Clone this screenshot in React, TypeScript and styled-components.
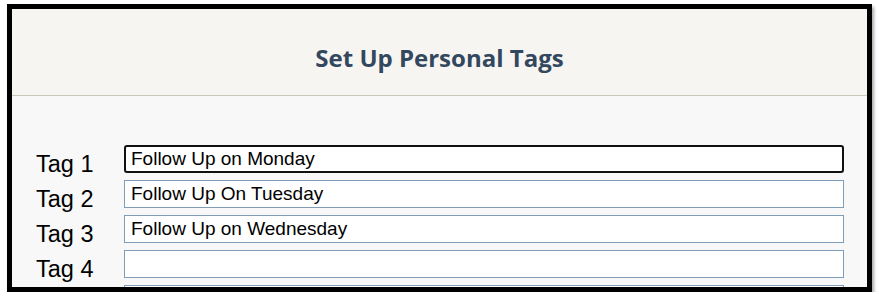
import React, { useEffect, useRef } from "react";
import styled, { createGlobalStyle } from "styled-components";

const tags = [
  "Follow Up on Monday",
  "Follow Up On Tuesday",
  "Follow Up on Wednesday",
  "",
  "",
];

const GlobalStyle = createGlobalStyle`
  html, body {
    margin: 0;
    padding: 0;
    background: #ffffff;
  }
  body {
    font-family: "Liberation Sans", Arial, sans-serif;
  }
`;

const Page = styled.div`
  padding: 4px 0 0 7px;
`;

const Frame = styled.div`
  width: 855px;
  height: 278px;
  border: 5px solid #000;
  box-shadow: 2px 3px 3px rgba(0, 0, 0, 0.35);
  overflow: hidden;
  background: #f8f8f8;
`;

const Header = styled.div`
  box-sizing: border-box;
  height: 87px;
  padding-top: 10px;
  background: #f6f5f1;
  border-bottom: 1px solid #cbc7b7;
  display: flex;
  align-items: center;
  justify-content: center;
`;

const Title = styled.h1`
  margin: 0;
  font-family: "Open Sans", "Lato", sans-serif;
  font-size: 24px;
  font-weight: 700;
  color: #33475f;
`;

const Body = styled.div`
  padding: 49px 23px 0 24px;
  display: grid;
  grid-template-columns: 88px 1fr;
  row-gap: 7px;
`;

const Label = styled.label`
  font-size: 23.5px;
  color: #000;
  line-height: 22px;
  align-self: end;
  margin-bottom: -2px;
`;

const Input = styled.input<{ $active?: boolean }>`
  box-sizing: border-box;
  width: 100%;
  height: 28px;
  margin: 0;
  font-family: "Liberation Sans", Arial, sans-serif;
  font-size: 19px;
  color: #000;
  background: #fff;
  border: ${(p) => (p.$active ? "2px solid #111" : "1px solid #7f9db9")};
  border-radius: ${(p) => (p.$active ? "3px" : "0")};
  padding: 0 0 0 ${(p) => (p.$active ? "5px" : "6px")};
  outline: none;
`;

export default function App() {
  const first = useRef<HTMLInputElement>(null);

  useEffect(() => {
    const el = first.current;
    if (el) {
      el.focus();
      el.setSelectionRange(el.value.length, el.value.length);
    }
  }, []);

  return (
    <Page>
      <GlobalStyle />
      <Frame>
        <Header>
          <Title>Set Up Personal Tags</Title>
        </Header>
        <Body>
          {tags.map((value, idx) => (
            <React.Fragment key={idx}>
              <Label htmlFor={`tag-${idx + 1}`}>
                {idx < 4 ? `Tag ${idx + 1}` : ""}
              </Label>
              <Input
                id={`tag-${idx + 1}`}
                ref={idx === 0 ? first : undefined}
                $active={idx === 0}
                defaultValue={value}
              />
            </React.Fragment>
          ))}
        </Body>
      </Frame>
    </Page>
  );
}
